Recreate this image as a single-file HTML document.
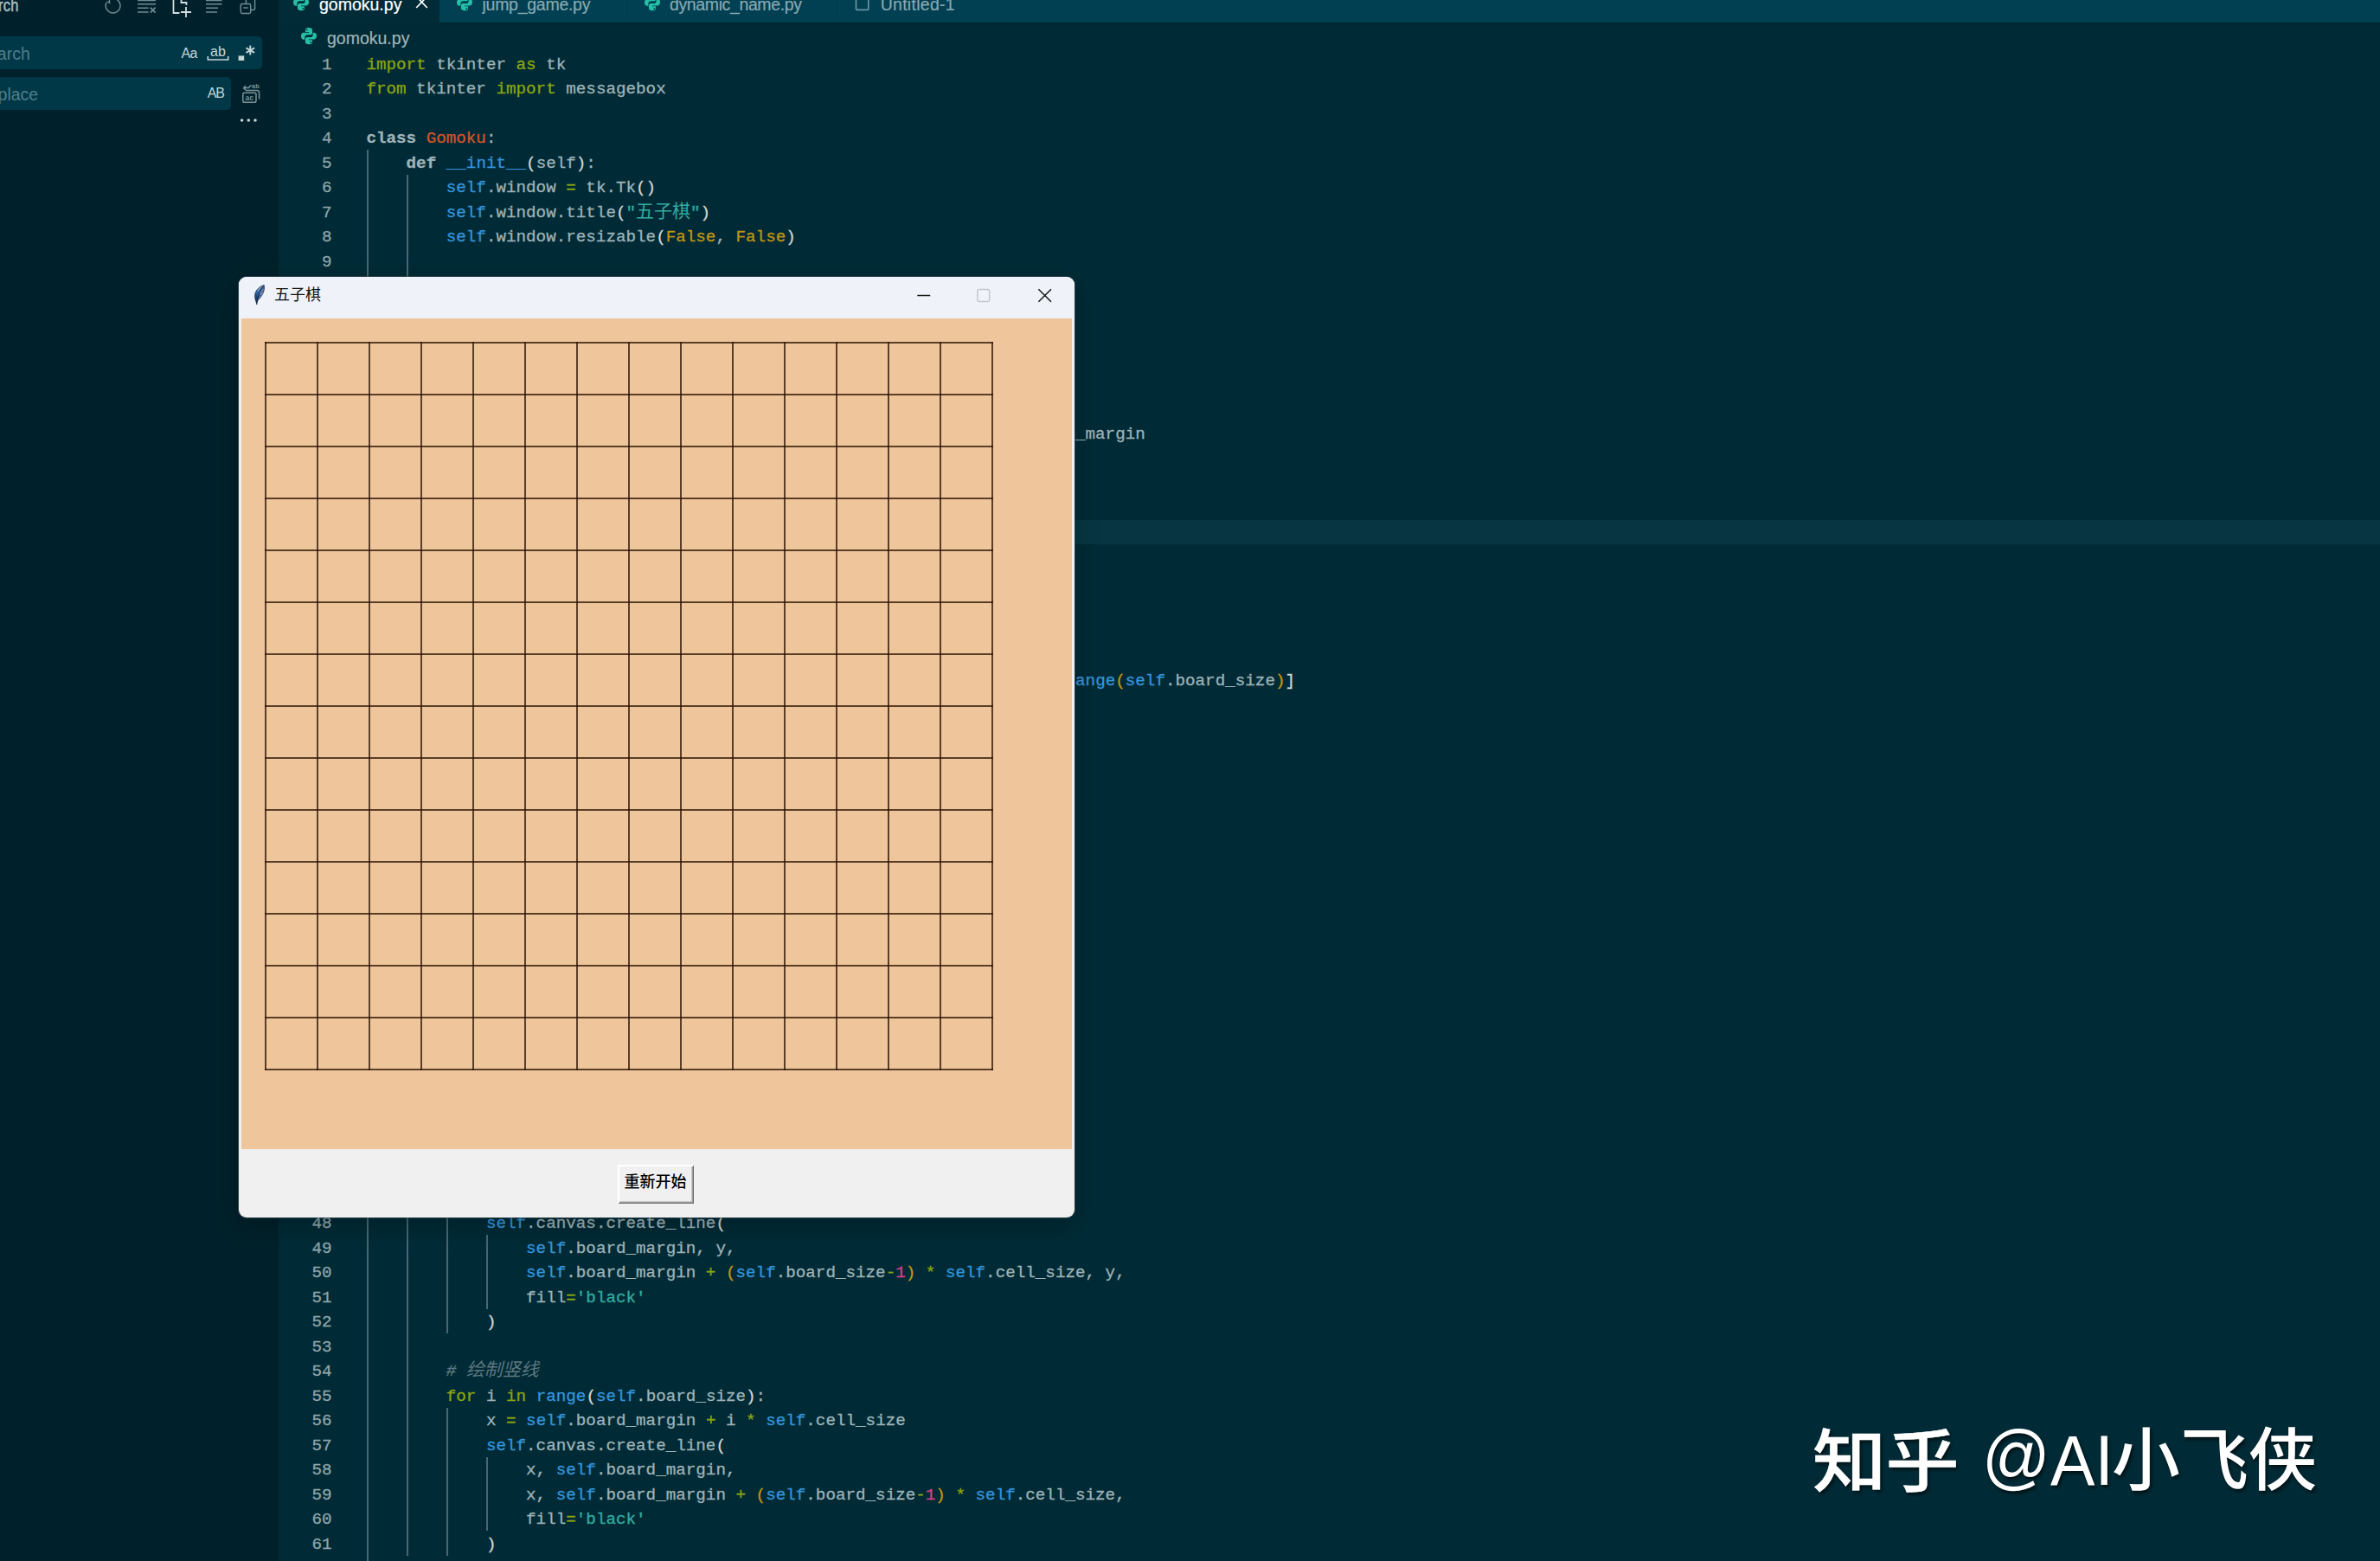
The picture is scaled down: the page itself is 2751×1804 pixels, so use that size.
<!DOCTYPE html>
<html lang="zh-CN">
<head>
<meta charset="utf-8">
<title>gomoku.py - 五子棋</title>
<style>
html,body{margin:0;padding:0}
body{width:2751px;height:1804px;overflow:hidden;position:relative;background:#002b36;
  font-family:"Liberation Sans","Noto Sans CJK SC",sans-serif;}
.abs{position:absolute}
/* ---------- sidebar ---------- */
#side{position:absolute;left:0;top:0;width:322px;height:1804px;background:#00212b}
#side .ttl{position:absolute;left:-32.2px;top:-8.2px;font-size:19.5px;letter-spacing:.2px;transform-origin:0 0;transform:scaleX(.85);font-weight:normal;-webkit-text-stroke:.55px #a6bcc1;color:#a6bcc1;white-space:pre;line-height:28px}
.inp{position:absolute;left:-10px;background:#003847;border-radius:5px}
.ph{position:absolute;font-size:19.5px;color:#4f7f8c;white-space:pre;line-height:28px}
.ib{position:absolute;font-size:16px;color:#c3d5d8;white-space:pre;line-height:20px}
/* ---------- tabs ---------- */
#tabs{position:absolute;left:322px;top:0;width:2429px;height:26px;background:#004052}
.tab{position:absolute;top:0;height:26px;box-sizing:border-box;border-right:1px solid rgba(0,56,71,.55)}
.tab.act{background:#002b37;border-right:0}
.tl{position:absolute;top:-9px;font-size:19.5px;line-height:28px;white-space:pre;color:#88a8b1;-webkit-text-stroke:.2px currentColor}
.tab.act .tl{color:#ffffff}
/* ---------- breadcrumb ---------- */
#bc{position:absolute;left:322px;top:26px;width:2429px;height:33px}
#bc .t{position:absolute;left:56px;top:3.5px;font-size:19.5px;line-height:28px;color:#a0b4b8;white-space:pre;-webkit-text-stroke:.2px currentColor}
/* ---------- editor ---------- */
#ed{position:absolute;left:0;top:0;width:2751px;height:1804px;overflow:hidden;pointer-events:none}
#hl{position:absolute;left:322px;top:600.5px;width:2429px;height:28.5px;background:#073642}
.ln{position:absolute;left:0;height:28.5px;line-height:28.5px;white-space:pre;
  font-family:"Liberation Mono","Noto Sans CJK SC",monospace;font-size:19.24px;color:#9fb3b8}
.no{position:absolute;left:283.5px;top:1.6px;width:100px;text-align:right;color:#8fa5aa;-webkit-text-stroke:.3px currentColor}
.cd{position:absolute;left:423.4px;top:1.6px;-webkit-text-stroke:.3px currentColor}
.cd b{font-weight:bold}
.k{color:#8ca510}.f{color:#3595dc}.o{color:#d5532a}.s{color:#33aba0}.n{color:#da418c}.y{color:#c39512}
.c{color:#5d7780;font-style:italic}
.cj{-webkit-text-stroke:0;font-size:21px;font-family:"Liberation Mono","Noto Sans CJK SC",monospace;line-height:20px}
.g{position:absolute;width:1.5px;background:#4a6771}
/* ---------- tk window ---------- */
#win{position:absolute;left:276px;top:320px;width:966px;height:1087px;border-radius:9px;background:#f0f0f0;
  overflow:hidden;box-shadow:0 0 0 1px rgba(60,80,88,.65),0 9px 30px rgba(0,0,0,.24)}
#tb{position:absolute;left:0;top:0;width:966px;height:48px;background:#eff3f9}
#tb .t{position:absolute;left:41px;top:5.5px;font-size:18px;line-height:30px;color:#111;white-space:pre;
  font-family:"Liberation Sans","Noto Sans CJK SC",sans-serif}
#cv{position:absolute;left:3px;top:48px;width:960px;height:960px;background:#efc59b}
#btn{position:absolute;left:438px;top:1026px;width:88px;height:45px;box-sizing:border-box;background:#f0f0f0;
  border-style:solid;border-width:2px 1.5px 1.5px 2px;border-color:#ffffff #696969 #696969 #ffffff;
  box-shadow:inset -1.5px -1.5px 0 #a0a0a0}
#btn span{position:absolute;left:0;top:0;width:83px;height:39px;line-height:37.5px;font-weight:500;text-align:center;font-size:18px;color:#000;
  font-family:"Liberation Sans","Noto Sans CJK SC",sans-serif;white-space:pre}
/* ---------- watermark ---------- */
.wm{position:absolute;line-height:110px;color:#fff;white-space:pre;font-weight:500;
  font-family:"Liberation Sans","Noto Sans CJK SC",sans-serif;text-shadow:2px 3px 4px rgba(0,0,0,.6)}
#wm1{left:2094.5px;top:1636px;font-size:79px;letter-spacing:-.8px;transform-origin:0 0;transform:scaleX(1.08);-webkit-text-stroke:.5px #fff}
#wm2{left:2291px;top:1628px;font-size:84px;transform-origin:0 0;transform:scaleX(.925)}
#wm3{left:2370px;top:1632.5px;font-size:82px;transform-origin:0 0;transform:scaleX(.94)}
#wm4{left:2441px;top:1634px;font-size:79px}
</style>
</head>
<body>

<!-- ================= editor (code) ================= -->
<div id="ed">
<div id="hl"></div>
<i class="g" style="left:424.0px;top:173.0px;height:1681.5px"></i>
<i class="g" style="left:470.0px;top:201.5px;height:1026.0px"></i>
<i class="g" style="left:470.0px;top:1284.5px;height:513.0px"></i>
<i class="g" style="left:516.0px;top:600.5px;height:114.0px"></i>
<i class="g" style="left:516.0px;top:1028.0px;height:85.5px"></i>
<i class="g" style="left:516.0px;top:1370.0px;height:171.0px"></i>
<i class="g" style="left:516.0px;top:1626.5px;height:171.0px"></i>
<i class="g" style="left:562.0px;top:1427.0px;height:85.5px"></i>
<i class="g" style="left:562.0px;top:1683.5px;height:85.5px"></i>
<div class="ln" style="top:59.0px"><span class="no">1</span><span class="cd"><span class="k">import</span> tkinter <span class="k">as</span> tk</span></div>
<div class="ln" style="top:87.5px"><span class="no">2</span><span class="cd"><span class="k">from</span> tkinter <span class="k">import</span> messagebox</span></div>
<div class="ln" style="top:116.0px"><span class="no">3</span><span class="cd"></span></div>
<div class="ln" style="top:144.5px"><span class="no">4</span><span class="cd"><b>class</b> <span class="o">Gomoku</span>:</span></div>
<div class="ln" style="top:173.0px"><span class="no">5</span><span class="cd">    <b>def</b> <span class="f">__init__</span><span style="color:#d2d6d6">(</span>self<span style="color:#d2d6d6">)</span>:</span></div>
<div class="ln" style="top:201.5px"><span class="no">6</span><span class="cd">        <span class="f">self</span>.window <span class="k">=</span> tk.Tk<span style="color:#d2d6d6">(</span><span style="color:#d2d6d6">)</span></span></div>
<div class="ln" style="top:230.0px"><span class="no">7</span><span class="cd">        <span class="f">self</span>.window.title<span style="color:#d2d6d6">(</span><span class="s">&quot;<span class="cj">五子棋</span>&quot;</span><span style="color:#d2d6d6">)</span></span></div>
<div class="ln" style="top:258.5px"><span class="no">8</span><span class="cd">        <span class="f">self</span>.window.resizable<span style="color:#d2d6d6">(</span><span class="y">False</span>, <span class="y">False</span><span style="color:#d2d6d6">)</span></span></div>
<div class="ln" style="top:287.0px"><span class="no">9</span><span class="cd"></span></div>
<div class="ln" style="top:315.5px"><span class="no">10</span><span class="cd">        <span class="f">self</span>.board_size <span class="k">=</span> <span class="n">15</span></span></div>
<div class="ln" style="top:344.0px"><span class="no">11</span><span class="cd">        <span class="f">self</span>.cell_size <span class="k">=</span> <span class="n">40</span></span></div>
<div class="ln" style="top:372.5px"><span class="no">12</span><span class="cd">        <span class="f">self</span>.board_margin <span class="k">=</span> <span class="n">20</span></span></div>
<div class="ln" style="top:401.0px"><span class="no">13</span><span class="cd">        <span class="f">self</span>.current_player <span class="k">=</span> <span class="n">1</span></span></div>
<div class="ln" style="top:429.5px"><span class="no">14</span><span class="cd"></span></div>
<div class="ln" style="top:458.0px"><span class="no">15</span><span class="cd">        <span class="c"># <span class="cj">计算画布大小</span></span></span></div>
<div class="ln" style="top:486.5px"><span class="no">16</span><span class="cd">        canvas_size <span class="k">=</span> <span class="f">self</span>.board_size <span class="k">*</span> <span class="f">self</span>.cell_size <span class="k">+</span> <span class="n">2</span> <span class="k">*</span> <span class="f">self</span>.board_margin</span></div>
<div class="ln" style="top:515.0px"><span class="no">17</span><span class="cd"></span></div>
<div class="ln" style="top:543.5px"><span class="no">18</span><span class="cd">        <span class="c"># <span class="cj">创建画布</span></span></span></div>
<div class="ln" style="top:572.0px"><span class="no">19</span><span class="cd">        <span class="f">self</span>.canvas <span class="k">=</span> tk.Canvas<span style="color:#d2d6d6">(</span></span></div>
<div class="ln" style="top:600.5px"><span class="no">20</span><span class="cd">            <span class="f">self</span>.window,</span></div>
<div class="ln" style="top:629.0px"><span class="no">21</span><span class="cd">            width<span class="k">=</span>canvas_size,</span></div>
<div class="ln" style="top:657.5px"><span class="no">22</span><span class="cd">            height<span class="k">=</span>canvas_size,</span></div>
<div class="ln" style="top:686.0px"><span class="no">23</span><span class="cd">            bg<span class="k">=</span><span class="s">&#x27;#F0C8A0&#x27;</span></span></div>
<div class="ln" style="top:714.5px"><span class="no">24</span><span class="cd">        <span style="color:#d2d6d6">)</span></span></div>
<div class="ln" style="top:743.0px"><span class="no">25</span><span class="cd">        <span class="f">self</span>.canvas.pack<span style="color:#d2d6d6">(</span><span style="color:#d2d6d6">)</span></span></div>
<div class="ln" style="top:771.5px"><span class="no">26</span><span class="cd">        <span class="f">self</span>.board <span class="k">=</span> <span style="color:#d2d6d6">[</span><span style="color:#c39512">[</span><span class="y">None</span> <span class="k">for</span> _ <span class="k">in</span> <span class="f">range</span><span style="color:#da418c">(</span><span class="f">self</span>.board_size<span style="color:#da418c">)</span><span style="color:#c39512">]</span> <span class="k">for</span> _ <span class="k">in</span> <span class="f">range</span><span style="color:#c39512">(</span><span class="f">self</span>.board_size<span style="color:#c39512">)</span><span style="color:#d2d6d6">]</span></span></div>
<div class="ln" style="top:800.0px"><span class="no">27</span><span class="cd">        <span class="f">self</span>.current_player <span class="k">=</span> <span class="s">&#x27;black&#x27;</span></span></div>
<div class="ln" style="top:828.5px"><span class="no">28</span><span class="cd">        <span class="f">self</span>.game_over <span class="k">=</span> <span class="y">False</span></span></div>
<div class="ln" style="top:857.0px"><span class="no">29</span><span class="cd"></span></div>
<div class="ln" style="top:885.5px"><span class="no">30</span><span class="cd">        <span class="c"># <span class="cj">绑定点击事件</span></span></span></div>
<div class="ln" style="top:914.0px"><span class="no">31</span><span class="cd">        <span class="f">self</span>.canvas.bind<span style="color:#d2d6d6">(</span><span class="s">&#x27;&lt;Button-1&gt;&#x27;</span>, <span class="f">self</span>.on_click<span style="color:#d2d6d6">)</span></span></div>
<div class="ln" style="top:942.5px"><span class="no">32</span><span class="cd"></span></div>
<div class="ln" style="top:971.0px"><span class="no">33</span><span class="cd">        <span class="c"># <span class="cj">重新开始按钮</span></span></span></div>
<div class="ln" style="top:999.5px"><span class="no">34</span><span class="cd">        <span class="f">self</span>.restart_button <span class="k">=</span> tk.Button<span style="color:#d2d6d6">(</span></span></div>
<div class="ln" style="top:1028.0px"><span class="no">35</span><span class="cd">            <span class="f">self</span>.window,</span></div>
<div class="ln" style="top:1056.5px"><span class="no">36</span><span class="cd">            text<span class="k">=</span><span class="s">&quot;<span class="cj">重新开始</span>&quot;</span>,</span></div>
<div class="ln" style="top:1085.0px"><span class="no">37</span><span class="cd">            command<span class="k">=</span><span class="f">self</span>.restart</span></div>
<div class="ln" style="top:1113.5px"><span class="no">38</span><span class="cd">        <span style="color:#d2d6d6">)</span></span></div>
<div class="ln" style="top:1142.0px"><span class="no">39</span><span class="cd">        <span class="f">self</span>.restart_button.pack<span style="color:#d2d6d6">(</span>pady<span class="k">=</span><span class="n">10</span><span style="color:#d2d6d6">)</span></span></div>
<div class="ln" style="top:1170.5px"><span class="no">40</span><span class="cd"></span></div>
<div class="ln" style="top:1199.0px"><span class="no">41</span><span class="cd">        <span class="f">self</span>.draw_board<span style="color:#d2d6d6">(</span><span style="color:#d2d6d6">)</span></span></div>
<div class="ln" style="top:1227.5px"><span class="no">42</span><span class="cd"></span></div>
<div class="ln" style="top:1256.0px"><span class="no">43</span><span class="cd">    <b>def</b> <span class="f">draw_board</span><span style="color:#d2d6d6">(</span>self<span style="color:#d2d6d6">)</span>:</span></div>
<div class="ln" style="top:1284.5px"><span class="no">44</span><span class="cd">        <span class="s">&quot;&quot;&quot;<span class="cj">绘制棋盘</span>&quot;&quot;&quot;</span></span></div>
<div class="ln" style="top:1313.0px"><span class="no">45</span><span class="cd">        <span class="c"># <span class="cj">绘制横线</span></span></span></div>
<div class="ln" style="top:1341.5px"><span class="no">46</span><span class="cd">        <span class="k">for</span> i <span class="k">in</span> <span class="f">range</span><span style="color:#d2d6d6">(</span><span class="f">self</span>.board_size<span style="color:#d2d6d6">)</span>:</span></div>
<div class="ln" style="top:1370.0px"><span class="no">47</span><span class="cd">            y <span class="k">=</span> <span class="f">self</span>.board_margin <span class="k">+</span> i <span class="k">*</span> <span class="f">self</span>.cell_size</span></div>
<div class="ln" style="top:1398.5px"><span class="no">48</span><span class="cd">            <span class="f">self</span>.canvas.create_line<span style="color:#d2d6d6">(</span></span></div>
<div class="ln" style="top:1427.0px"><span class="no">49</span><span class="cd">                <span class="f">self</span>.board_margin, y,</span></div>
<div class="ln" style="top:1455.5px"><span class="no">50</span><span class="cd">                <span class="f">self</span>.board_margin <span class="k">+</span> <span style="color:#c39512">(</span><span class="f">self</span>.board_size<span class="k">-</span><span class="n">1</span><span style="color:#c39512">)</span> <span class="k">*</span> <span class="f">self</span>.cell_size, y,</span></div>
<div class="ln" style="top:1484.0px"><span class="no">51</span><span class="cd">                fill<span class="k">=</span><span class="s">&#x27;black&#x27;</span></span></div>
<div class="ln" style="top:1512.5px"><span class="no">52</span><span class="cd">            <span style="color:#d2d6d6">)</span></span></div>
<div class="ln" style="top:1541.0px"><span class="no">53</span><span class="cd"></span></div>
<div class="ln" style="top:1569.5px"><span class="no">54</span><span class="cd">        <span class="c"># <span class="cj">绘制竖线</span></span></span></div>
<div class="ln" style="top:1598.0px"><span class="no">55</span><span class="cd">        <span class="k">for</span> i <span class="k">in</span> <span class="f">range</span><span style="color:#d2d6d6">(</span><span class="f">self</span>.board_size<span style="color:#d2d6d6">)</span>:</span></div>
<div class="ln" style="top:1626.5px"><span class="no">56</span><span class="cd">            x <span class="k">=</span> <span class="f">self</span>.board_margin <span class="k">+</span> i <span class="k">*</span> <span class="f">self</span>.cell_size</span></div>
<div class="ln" style="top:1655.0px"><span class="no">57</span><span class="cd">            <span class="f">self</span>.canvas.create_line<span style="color:#d2d6d6">(</span></span></div>
<div class="ln" style="top:1683.5px"><span class="no">58</span><span class="cd">                x, <span class="f">self</span>.board_margin,</span></div>
<div class="ln" style="top:1712.0px"><span class="no">59</span><span class="cd">                x, <span class="f">self</span>.board_margin <span class="k">+</span> <span style="color:#c39512">(</span><span class="f">self</span>.board_size<span class="k">-</span><span class="n">1</span><span style="color:#c39512">)</span> <span class="k">*</span> <span class="f">self</span>.cell_size,</span></div>
<div class="ln" style="top:1740.5px"><span class="no">60</span><span class="cd">                fill<span class="k">=</span><span class="s">&#x27;black&#x27;</span></span></div>
<div class="ln" style="top:1769.0px"><span class="no">61</span><span class="cd">            <span style="color:#d2d6d6">)</span></span></div>
<div class="ln" style="top:1797.5px"><span class="no">62</span><span class="cd"></span></div>
</div>

<!-- ================= sidebar ================= -->
<div id="side">
  <div class="ttl">Search</div>
  <svg class="abs" style="left:110px;top:0" width="200" height="30" viewBox="110 0 200 30" fill="none" stroke="#6f8c93" stroke-width="1.45">
    <!-- refresh -->
    <path d="M123.1 2.8A8.4 8.4 0 1 0 135.4 -0.3"/>
    <path d="M126.3 -1L126.7 3.3L123.6 1.9"/>
    <!-- clear all -->
    <path d="M159 0.4H180M159 4.8H180M159 9.3H171.5M159 13.9H171.5"/>
    <path d="M173.8 8.6L179.6 14.6M179.6 8.6L173.8 14.6" stroke-width="1.7"/>
    <!-- new file -->
    <g stroke="#d3dddf" stroke-width="1.8">
      <path d="M200.5 -2V15H207.5"/>
      <path d="M209.5 -2V3H215.5V6"/>
      <path d="M215 8V20M209 14H221"/>
    </g>
    <!-- list -->
    <path d="M238 0.4H256.5M238 4.8H256.5M238 9.3H252M238 13.9H251"/>
    <!-- collapse all -->
    <rect x="278.3" y="4.4" width="11.4" height="11" rx="1.6"/>
    <path d="M281.3 9H286.8"/>
    <path d="M284.4 -2V4M294.6 -2V9.5Q294.6 11.4 292.6 11.4H290"/>
  </svg>
  <div class="inp" style="top:42px;width:313px;height:38px"></div>
  <div class="ph" style="left:-27px;top:48px">Search</div>
  <div class="ib" style="left:209.5px;top:51.5px;letter-spacing:-.7px">Aa</div>
  <div class="ib" style="left:243px;top:49.6px">ab</div>
  <svg class="abs" style="left:238px;top:62px" width="30" height="10" viewBox="0 0 30 10" fill="none" stroke="#c3d5d8" stroke-width="1.6"><path d="M2.3 3V7H25.7V3"/></svg>
  <svg class="abs" style="left:273px;top:50px" width="26" height="22" viewBox="0 0 26 22" fill="none" stroke="#c3d5d8" stroke-width="1.9"><rect x="2.6" y="14.4" width="6.6" height="5.6" fill="#c3d5d8" stroke="none"/><path d="M16.3 2.6V13.6M11.5 5.4L21.1 10.8M21.1 5.4L11.5 10.8"/></svg>
  <div class="inp" style="top:89px;width:277px;height:38px"></div>
  <div class="ph" style="left:-27.4px;top:95.4px">Replace</div>
  <div class="ib" style="left:239.8px;top:98px;letter-spacing:-1.1px">AB</div>
  <!-- replace all icon -->
  <svg class="abs" style="left:278px;top:96px" width="26" height="26" viewBox="0 0 26 26" fill="none" stroke="#7a9299" stroke-width="1.5">
    <rect x="2.8" y="11.2" width="15.2" height="11" rx="1.8"/>
    <path d="M6 8.4H19Q21.6 8.4 21.6 11V18.6"/>
    <path d="M3.4 5.6H10M3.4 5.6L6 3.2M3.4 5.6L6 8"/>
    <path d="M10 5.6Q10 3 12.6 3"/>
    <text x="13" y="6.4" font-family="Liberation Sans, sans-serif" font-size="7.5" font-weight="bold" fill="#7a9299" stroke="none">ab</text>
    <text x="5.6" y="20.2" font-family="Liberation Sans, sans-serif" font-size="8.5" font-weight="bold" fill="#7a9299" stroke="none">ac</text>
  </svg>
  <svg class="abs" style="left:274px;top:134px" width="26" height="10" viewBox="0 0 26 10"><g fill="#c5d5d8"><circle cx="5.6" cy="5" r="1.8"/><circle cx="13.3" cy="5" r="1.8"/><circle cx="21" cy="5" r="1.8"/></g></svg>
</div>

<!-- ================= tabs ================= -->
<div id="tabs">
  <div class="tab act" style="left:0;width:186px">
    <svg class="abs py" style="left:16px;top:-7.6px" width="20" height="21.4" viewBox="0 0 24 24" preserveAspectRatio="none"><g fill="#25bfa5"><path fill-rule="evenodd" d="M11.8 1.2C8 1.2 7.2 2.8 7.2 4.4V6.8H12.1V7.7H4.9C2.6 7.7 1.2 9.5 1.2 12.1C1.2 14.8 2.5 16.5 4.6 16.5H6.4V13.7C6.4 11.7 8 10.4 9.9 10.4H14.4C15.9 10.4 16.9 9.2 16.9 7.7V4.3C16.9 2.3 14.9 1.2 11.8 1.2ZM9.2 2.7A1.05 1.05 0 1 1 9.2 4.8A1.05 1.05 0 1 1 9.2 2.7Z"/>
      <path fill-rule="evenodd" transform="rotate(180 12 12)" d="M11.8 1.2C8 1.2 7.2 2.8 7.2 4.4V6.8H12.1V7.7H4.9C2.6 7.7 1.2 9.5 1.2 12.1C1.2 14.8 2.5 16.5 4.6 16.5H6.4V13.7C6.4 11.7 8 10.4 9.9 10.4H14.4C15.9 10.4 16.9 9.2 16.9 7.7V4.3C16.9 2.3 14.9 1.2 11.8 1.2ZM9.2 2.7A1.05 1.05 0 1 1 9.2 4.8A1.05 1.05 0 1 1 9.2 2.7Z"/></g></svg>
    <div class="tl" style="left:47px">gomoku.py</div>
    <svg class="abs" style="left:157px;top:-6px" width="18" height="18" viewBox="0 0 18 18" stroke="#fff" stroke-width="1.7" fill="none"><path d="M2.2 1.8L14.8 15M14.8 1.8L2.2 15"/></svg>
  </div>
  <div class="tab" style="left:186px;width:217px">
    <svg class="abs py" style="left:19px;top:-7.6px" width="20" height="21.4" viewBox="0 0 24 24" preserveAspectRatio="none"><g fill="#25bfa5"><path fill-rule="evenodd" d="M11.8 1.2C8 1.2 7.2 2.8 7.2 4.4V6.8H12.1V7.7H4.9C2.6 7.7 1.2 9.5 1.2 12.1C1.2 14.8 2.5 16.5 4.6 16.5H6.4V13.7C6.4 11.7 8 10.4 9.9 10.4H14.4C15.9 10.4 16.9 9.2 16.9 7.7V4.3C16.9 2.3 14.9 1.2 11.8 1.2ZM9.2 2.7A1.05 1.05 0 1 1 9.2 4.8A1.05 1.05 0 1 1 9.2 2.7Z"/>
      <path fill-rule="evenodd" transform="rotate(180 12 12)" d="M11.8 1.2C8 1.2 7.2 2.8 7.2 4.4V6.8H12.1V7.7H4.9C2.6 7.7 1.2 9.5 1.2 12.1C1.2 14.8 2.5 16.5 4.6 16.5H6.4V13.7C6.4 11.7 8 10.4 9.9 10.4H14.4C15.9 10.4 16.9 9.2 16.9 7.7V4.3C16.9 2.3 14.9 1.2 11.8 1.2ZM9.2 2.7A1.05 1.05 0 1 1 9.2 4.8A1.05 1.05 0 1 1 9.2 2.7Z"/></g></svg>
    <div class="tl" style="left:49.5px;letter-spacing:-.27px">jump_game.py</div>
  </div>
  <div class="tab" style="left:403px;width:243px">
    <svg class="abs py" style="left:19px;top:-7.6px" width="20" height="21.4" viewBox="0 0 24 24" preserveAspectRatio="none"><g fill="#25bfa5"><path fill-rule="evenodd" d="M11.8 1.2C8 1.2 7.2 2.8 7.2 4.4V6.8H12.1V7.7H4.9C2.6 7.7 1.2 9.5 1.2 12.1C1.2 14.8 2.5 16.5 4.6 16.5H6.4V13.7C6.4 11.7 8 10.4 9.9 10.4H14.4C15.9 10.4 16.9 9.2 16.9 7.7V4.3C16.9 2.3 14.9 1.2 11.8 1.2ZM9.2 2.7A1.05 1.05 0 1 1 9.2 4.8A1.05 1.05 0 1 1 9.2 2.7Z"/>
      <path fill-rule="evenodd" transform="rotate(180 12 12)" d="M11.8 1.2C8 1.2 7.2 2.8 7.2 4.4V6.8H12.1V7.7H4.9C2.6 7.7 1.2 9.5 1.2 12.1C1.2 14.8 2.5 16.5 4.6 16.5H6.4V13.7C6.4 11.7 8 10.4 9.9 10.4H14.4C15.9 10.4 16.9 9.2 16.9 7.7V4.3C16.9 2.3 14.9 1.2 11.8 1.2ZM9.2 2.7A1.05 1.05 0 1 1 9.2 4.8A1.05 1.05 0 1 1 9.2 2.7Z"/></g></svg>
    <div class="tl" style="left:49px;letter-spacing:-.38px">dynamic_name.py</div>
  </div>
  <div class="tab" style="left:646px;width:181px">
    <svg class="abs" style="left:20px;top:-8px" width="18" height="22" viewBox="0 0 18 22" fill="none" stroke="#6a93a0" stroke-width="1.7"><path d="M1.5 -2V18.3Q1.5 19.3 2.5 19.3H14.8Q15.8 19.3 15.8 18.3V-2"/></svg>
    <div class="tl" style="left:49.7px;letter-spacing:.28px">Untitled-1</div>
  </div>
</div>

<div class="abs" style="left:508px;top:26px;width:2243px;height:6px;background:linear-gradient(rgba(0,0,0,.16),rgba(0,0,0,0))"></div>
<!-- ================= breadcrumb ================= -->
<div id="bc">
  <svg class="abs py" style="left:25px;top:5.3px" width="20" height="21.4" viewBox="0 0 24 24" preserveAspectRatio="none"><g fill="#25bfa5"><path fill-rule="evenodd" d="M11.8 1.2C8 1.2 7.2 2.8 7.2 4.4V6.8H12.1V7.7H4.9C2.6 7.7 1.2 9.5 1.2 12.1C1.2 14.8 2.5 16.5 4.6 16.5H6.4V13.7C6.4 11.7 8 10.4 9.9 10.4H14.4C15.9 10.4 16.9 9.2 16.9 7.7V4.3C16.9 2.3 14.9 1.2 11.8 1.2ZM9.2 2.7A1.05 1.05 0 1 1 9.2 4.8A1.05 1.05 0 1 1 9.2 2.7Z"/>
      <path fill-rule="evenodd" transform="rotate(180 12 12)" d="M11.8 1.2C8 1.2 7.2 2.8 7.2 4.4V6.8H12.1V7.7H4.9C2.6 7.7 1.2 9.5 1.2 12.1C1.2 14.8 2.5 16.5 4.6 16.5H6.4V13.7C6.4 11.7 8 10.4 9.9 10.4H14.4C15.9 10.4 16.9 9.2 16.9 7.7V4.3C16.9 2.3 14.9 1.2 11.8 1.2ZM9.2 2.7A1.05 1.05 0 1 1 9.2 4.8A1.05 1.05 0 1 1 9.2 2.7Z"/></g></svg>
  <div class="t">gomoku.py</div>
</div>

<!-- ================= tk window ================= -->
<div id="win">
  <div id="tb">
    <svg class="abs" style="left:16px;top:8px" width="16" height="26" viewBox="0 0 16 26">
      <defs><linearGradient id="fg" x1="1" y1="0" x2="0" y2="1"><stop offset="0" stop-color="#2b4a78"/><stop offset=".35" stop-color="#7ea8da"/><stop offset=".65" stop-color="#2f5f9e"/><stop offset="1" stop-color="#0a1930"/></linearGradient></defs>
      <path d="M4.7 24C4.5 20.2 1.6 17 2.9 11.4C4 6.6 8.4 2.8 13.2 1.4C14.2 5.4 12.8 10.2 10.6 13.6C9 16.2 6.6 18 5.5 20Z" fill="url(#fg)" stroke="#1f3656" stroke-width=".8"/>
      <path d="M12.2 3.4C8.8 7.8 6 13.4 4.9 21.6" fill="none" stroke="#0b1a30" stroke-width="1"/>
      <path d="M9.2 5.4L8 9M6.6 8.6L5.8 12.6M11.6 8.2L9.4 10.6M10.2 12.4L7.6 14.4M4.6 12.6L4.6 16.4" fill="none" stroke="#16305a" stroke-width=".8"/>
    </svg>
    <div class="t">五子棋</div>
    <svg class="abs" style="left:770px;top:0" width="196" height="48" viewBox="0 0 196 48" fill="none">
      <path d="M14.3 21.5H29.2" stroke="#1a1a1a" stroke-width="1.5"/>
      <rect x="83.9" y="14.6" width="13.8" height="13.8" rx="2" stroke="#c3c7cd" stroke-width="1.5"/>
      <path d="M154.4 14.2L169 28.8M169 14.2L154.4 28.8" stroke="#1a1a1a" stroke-width="1.6"/>
    </svg>
  </div>
  <div id="cv">
    <svg class="abs" style="left:0;top:0" width="960" height="960" viewBox="0 0 960 960">
      <g stroke="#2a1000" stroke-width="1.5">
        <path d="M28 27V869"/><path d="M27 28H869"/><path d="M88 27V869"/><path d="M27 88H869"/><path d="M148 27V869"/><path d="M27 148H869"/><path d="M208 27V869"/><path d="M27 208H869"/><path d="M268 27V869"/><path d="M27 268H869"/><path d="M328 27V869"/><path d="M27 328H869"/><path d="M388 27V869"/><path d="M27 388H869"/><path d="M448 27V869"/><path d="M27 448H869"/><path d="M508 27V869"/><path d="M27 508H869"/><path d="M568 27V869"/><path d="M27 568H869"/><path d="M628 27V869"/><path d="M27 628H869"/><path d="M688 27V869"/><path d="M27 688H869"/><path d="M748 27V869"/><path d="M27 748H869"/><path d="M808 27V869"/><path d="M27 808H869"/><path d="M868 27V869"/><path d="M27 868H869"/>
      </g>
    </svg>
  </div>
  <div id="btn"><span>重新开始</span></div>
</div>

<!-- ================= watermark ================= -->
<div class="wm" id="wm1">知乎</div><div class="wm" id="wm2">@</div><div class="wm" id="wm3">AI</div><div class="wm" id="wm4">小飞侠</div>

</body>
</html>
